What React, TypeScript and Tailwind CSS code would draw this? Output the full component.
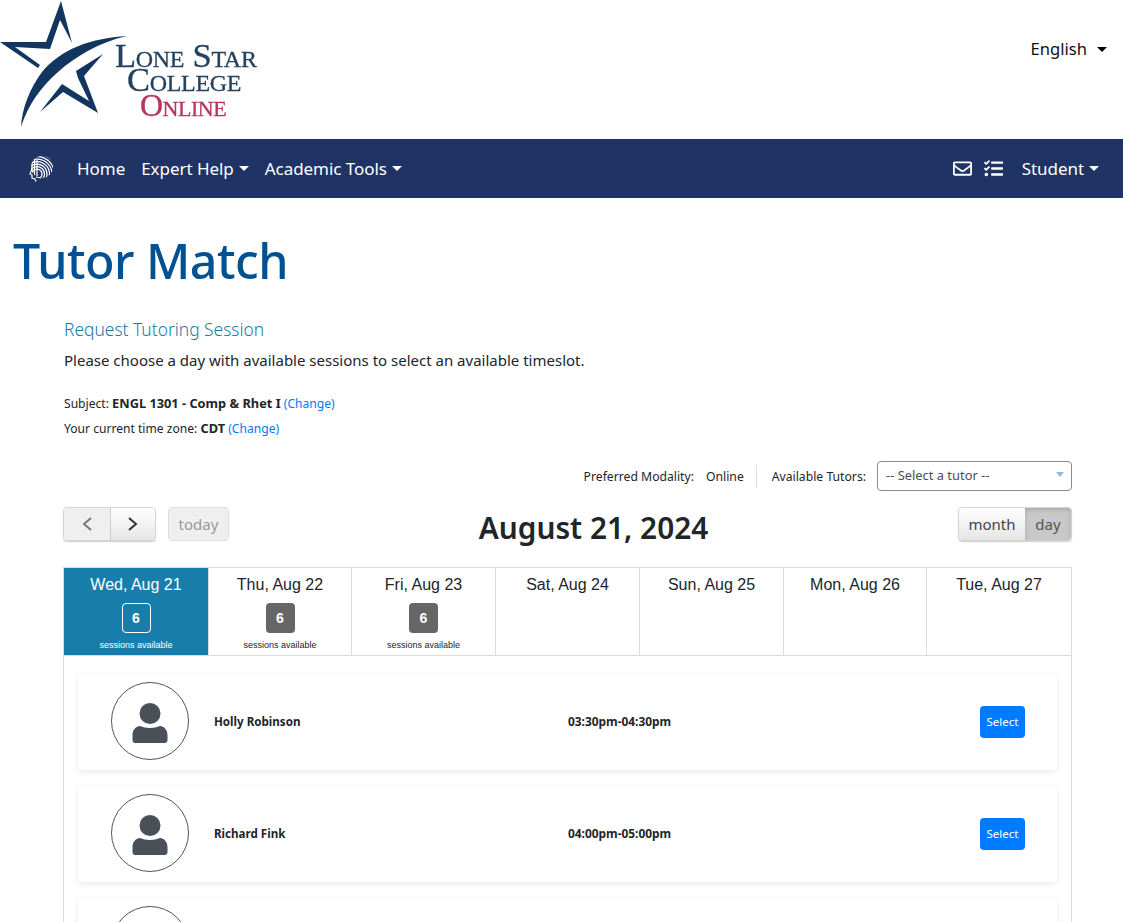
import { FaRegEnvelope, FaTasks } from "react-icons/fa";

type DayCol = { label: string; sessions?: number; active?: boolean };

const DAYS: DayCol[] = [
  { label: "Wed, Aug 21", sessions: 6, active: true },
  { label: "Thu, Aug 22", sessions: 6 },
  { label: "Fri, Aug 23", sessions: 6 },
  { label: "Sat, Aug 24" },
  { label: "Sun, Aug 25" },
  { label: "Mon, Aug 26" },
  { label: "Tue, Aug 27" },
];

const SESSIONS = [
  { name: "Holly Robinson", time: "03:30pm-04:30pm" },
  { name: "Richard Fink", time: "04:00pm-05:00pm" },
  { name: "", time: "" },
];

function Caret({ className }: { className: string }) {
  return <span className={`inline-block h-0 w-0 border-x-[5px] border-t-[5px] border-x-transparent ${className}`} />;
}

function Logo() {
  return (
    <div className="relative h-[130px] w-[262px] blur-[0.7px]">
      <svg className="absolute left-0 top-0" width="130" height="130" viewBox="0 0 130 130" fill="#12365f">
        <path d="M61 1 L46 42 L0 42 L38 68 L40 65 L15 47 L50 49 L60 20 L72 43 Z" />
        <path d="M127 36 C90 38 60 50 42 72 C30 88 22 108 21 127 C28 105 40 88 58 72 C76 56 100 42 127 36 Z" />
        <path d="M103 54 L76 71 L78 78 L89 101 L62 84 L40 112 L63 92 L98 113 L84 76 Z" />
      </svg>
      <div className="absolute left-[115px] top-[43px] whitespace-nowrap font-['Liberation_Serif',serif] text-[34.500px] leading-[24px] tracking-[-0.3px] text-[#24425f] [-webkit-text-stroke:0.3px_#24425f] [font-variant:small-caps]">
        Lone Star
      </div>
      <div className="absolute left-[127px] top-[67px] whitespace-nowrap font-['Liberation_Serif',serif] text-[34.500px] leading-[24px] tracking-[-0.3px] text-[#24425f] [-webkit-text-stroke:0.3px_#24425f] [font-variant:small-caps]">
        College
      </div>
      <div className="absolute left-[140px] top-[93px] whitespace-nowrap font-['Liberation_Serif',serif] text-[32px] leading-[24px] tracking-[-0.5px] text-[#b5365f] [-webkit-text-stroke:0.3px_#b5365f] [font-variant:small-caps]">
        Online
      </div>
    </div>
  );
}

function FingerprintMark() {
  const radii = [5, 7.500, 10, 12.500, 15, 17.500, 20];
  return (
    <svg width="24" height="26" viewBox="0 0 24 26" fill="none" stroke="#fff">
      <clipPath id="head">
        <circle cx="13" cy="11" r="11" />
      </clipPath>
      <g clipPath="url(#head)" strokeWidth="1.25">
        {radii.map((r) => (
          <circle key={r} cx="8" cy="18" r={r} />
        ))}
        <path d="M3 2 V20 M5.500 2 V20 M8 4 V20" />
      </g>
      <path d="M3 13 L1 18 L3 19 L3 22 L6 23 L7 25.500 M7 21 L12 22" strokeWidth="1.2" />
    </svg>
  );
}

function UserGlyph() {
  return (
    <svg className="mt-[3px]" width="36" height="40" viewBox="0 0 36 40" fill="#495057">
      <circle cx="18" cy="10.500" r="10.500" />
      <path d="M8 23 C4 23 0.500 27 0.500 32 L0.500 37 C0.500 38.500 1.500 40 3 40 L33 40 C34.500 40 35.500 38.500 35.500 37 L35.500 32 C35.500 27 32 23 28 23 C25 24 22 25 18 25 C14 25 11 24 8 23 Z" />
    </svg>
  );
}

function SessionCard({ name, time }: { name: string; time: string }) {
  return (
    <div className="flex h-[96px] shrink-0 items-center rounded-[4px] bg-white shadow-[0_2px_6px_rgba(0,0,0,0.09)]">
      <div className="mb-[2px] ml-[33px] flex h-[78px] w-[78px] shrink-0 items-center justify-center rounded-full border border-[#555]">
        <UserGlyph />
      </div>
      <div className="ml-[25px] w-[354px] text-[11.600px] font-bold text-[#212529]">{name}</div>
      <div className="text-[11.900px] font-bold text-[#212529]">{time}</div>
      {name ? (
        <button className="ml-auto mr-[32px] h-[32px] w-[45px] rounded-[4px] bg-[#007bff] text-[11.500px] text-white">
          Select
        </button>
      ) : null}
    </div>
  );
}

export default function App() {
  return (
    <div className="h-[922px] overflow-hidden bg-white font-['Noto_Sans',sans-serif] text-[#212529]">
      <header className="flex h-[139px] items-start justify-between overflow-hidden">
        <Logo />
        <div className="mr-[16px] mt-[37px] flex items-center gap-[10px] text-[16.600px] leading-[24px] text-[#111]">
          English
          <Caret className="border-t-black" />
        </div>
      </header>

      <nav className="flex h-[59px] items-center bg-[#1f3464] pl-[29px] pr-[24px] text-[17px] tracking-[-0.05px] text-white">
        <FingerprintMark />
        <div className="ml-[24px] flex items-center gap-[16px]">
          <span>Home</span>
          <span className="flex items-center gap-[5px]">
            Expert Help <Caret className="border-t-white" />
          </span>
          <span className="flex items-center gap-[5px]">
            Academic Tools <Caret className="border-t-white" />
          </span>
        </div>
        <div className="ml-auto flex items-center">
          <FaRegEnvelope className="text-[19px]" />
          <FaTasks className="ml-[12px] text-[19px]" />
          <span className="ml-[19px] flex items-center gap-[5px]">
            Student <Caret className="border-t-white" />
          </span>
        </div>
      </nav>

      <h1 className="ml-[13px] mt-[30px] text-[48.300px] font-[550] leading-[64px] tracking-[-0.5px] text-[#005192]">
        Tutor Match
      </h1>

      <main className="ml-[64px] w-[1008px]">
        <p className="mt-[25px] text-[17.400px] font-light leading-[24px] text-[#1a7aa5]">Request Tutoring Session</p>
        <p className="mt-[7px] text-[15px] leading-[24px]">
          Please choose a day with available sessions to select an available timeslot.
        </p>
        <p className="mt-[23px] text-[12.100px] leading-[18px]">
          Subject: <b className="text-[12.800px] leading-none">ENGL 1301 - Comp &amp; Rhet I</b>{" "}
          <span className="text-[#007bff]">(Change)</span>
        </p>
        <p className="mt-[7px] text-[12.100px] leading-[18px]">
          Your current time zone: <b className="text-[12.800px] leading-none">CDT</b>{" "}
          <span className="text-[#007bff]">(Change)</span>
        </p>

        <div className="mt-[23px] flex h-[30px] items-center justify-end text-[12.200px]">
          <span className="mt-[3px]">Preferred Modality:</span>
          <span className="ml-[12px] mt-[3px]">Online</span>
          <span className="ml-[12px] h-[23px] border-l border-[#dee2e6]" />
          <span className="ml-[15px] mt-[3px]">Available Tutors:</span>
          <div className="ml-[11px] flex h-[30px] w-[195px] items-center justify-between rounded-[4px] border border-[#8a8a8a] pl-[8px] pr-[7px] text-[12.900px] text-[#495057]">
            <span>-- Select a tutor --</span>
            <span className="-mt-[4px] h-0 w-0 border-x-[4px] border-t-[5px] border-x-transparent border-t-[#8db9e2]" />
          </div>
        </div>

        <div className="mt-[16px] flex h-[34px] items-center justify-between">
          <div className="-ml-px flex items-center">
            <div className="flex h-[34px] overflow-hidden rounded-[4px] border border-[#d5d5d5] shadow-[0_1px_1px_rgba(0,0,0,0.2)]">
              <div className="flex w-[46px] items-center justify-center bg-[#efefef] text-[#777]">
                <svg width="12" height="16" viewBox="0 0 12 16" fill="none" stroke="currentColor" strokeWidth="2">
                  <path d="M10 2 L3 8 L10 14" />
                </svg>
              </div>
              <div className="flex w-[45px] items-center justify-center border-l border-[#ccc] bg-gradient-to-b from-white to-[#e6e6e6] text-[#333]">
                <svg width="12" height="16" viewBox="0 0 12 16" fill="none" stroke="currentColor" strokeWidth="2">
                  <path d="M2 2 L9 8 L2 14" />
                </svg>
              </div>
            </div>
            <div className="ml-[12px] flex h-[34px] w-[61px] items-center justify-center rounded-[4px] border border-[#ddd] bg-[#efefef] text-[15px] text-[#999]">
              today
            </div>
          </div>
          <h2 className="mt-[8px] text-[29.800px] font-semibold leading-[34px] text-[#212529]">August 21, 2024</h2>
          <div className="flex h-[34px] overflow-hidden rounded-[4px] border border-[#d5d5d5] text-[15px] shadow-[0_1px_1px_rgba(0,0,0,0.2)]">
            <div className="flex w-[66px] items-center justify-center bg-gradient-to-b from-white to-[#e6e6e6] text-[#444]">
              month
            </div>
            <div className="flex w-[46px] items-center justify-center bg-[#c8c8c8] text-[#555] shadow-[inset_0_2px_4px_rgba(0,0,0,0.15)]">
              day
            </div>
          </div>
        </div>

        <div className="-ml-px mt-[26px] h-[400px] overflow-hidden border border-b-0 border-[#dcdcdc]">
          <div className="grid h-[88px] grid-cols-[145px_143px_144px_144px_144px_143px_1fr] border-b border-[#dcdcdc] font-['Liberation_Sans',sans-serif]">
            {DAYS.map((day) => (
              <div
                key={day.label}
                className={`flex flex-col items-center border-r border-[#dcdcdc] pt-[7px] last:border-r-0 ${
                  day.active ? "bg-[#177eab] text-white" : "text-[#212529]"
                }`}
              >
                <span className="text-[16px] leading-[19px]">{day.label}</span>
                {day.sessions ? (
                  <>
                    <span
                      className={`mt-[9px] flex h-[30px] w-[29px] items-center justify-center rounded-[4px] text-[14px] font-bold text-white ${
                        day.active ? "border border-white" : "bg-[#666]"
                      }`}
                    >
                      {day.sessions}
                    </span>
                    <span className="mt-[6px] text-[9px] leading-[12px]">sessions available</span>
                  </>
                ) : null}
              </div>
            ))}
          </div>
          <div className="flex flex-col gap-[16px] px-[14px] pt-[18px]">
            {SESSIONS.map((session, index) => (
              <SessionCard key={index} name={session.name} time={session.time} />
            ))}
          </div>
        </div>
      </main>
    </div>
  );
}
